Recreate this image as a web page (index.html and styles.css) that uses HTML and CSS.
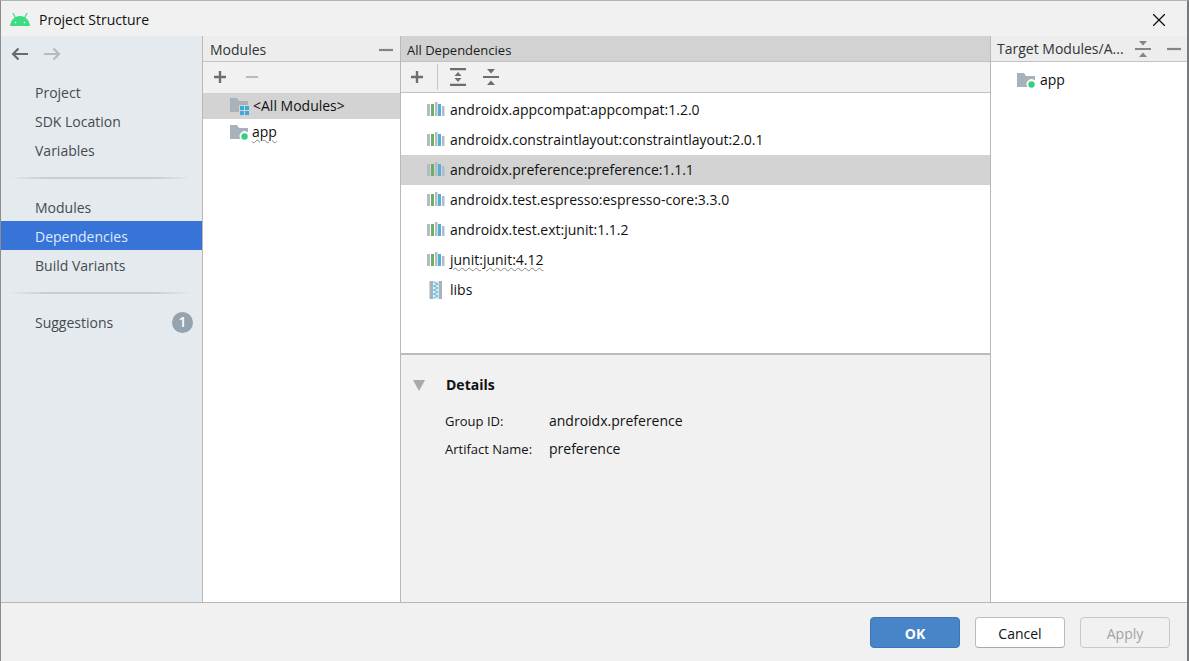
FILE: index.html
```html
<!DOCTYPE html>
<html lang="en">
<head>
<meta charset="utf-8">
<title>Project Structure</title>
<link rel="stylesheet" href="styles.css">
</head>
<body>
<svg class="defs" aria-hidden="true">
  <symbol id="lib" viewBox="0 0 18 16">
    <path fill="#b3bcc2" d="M0 2h3v12H0zM8 0h2.500v14H8zM15 4h2.500v10H15z"/>
    <path fill="#6bb060" d="M4 2h3v12H4z"/>
    <path fill="#50b0d8" d="M11 2h3v12h-3z"/>
  </symbol>
  <symbol id="folder-app" viewBox="0 0 18 17">
    <path fill="#a7b2ba" d="M0 1h7l2 3h9v4.500a5 5 0 0 0-7.500 6.500H0z"/>
    <circle cx="14.500" cy="12.500" r="3.200" fill="#35d07f"/>
  </symbol>
  <symbol id="folder-all" viewBox="0 0 19 18">
    <path fill="#a7b2ba" d="M0 1h7l2 3h9v4H9v7H0z"/>
    <path fill="#3fa9d6" d="M10 9h4v4h-4zM15 9h4v4h-4zM10 14h4v4h-4zM15 14h4v4h-4z"/>
  </symbol>
  <symbol id="plus" viewBox="0 0 16 16"><path stroke="#6e6e6e" stroke-width="2.400" d="M8 2v12M2 8h12"/></symbol>
  <symbol id="minus" viewBox="0 0 16 16"><path stroke="currentColor" stroke-width="2.200" d="M1 8h14"/></symbol>
  <symbol id="collapse" viewBox="0 0 16 16">
    <path fill="currentColor" d="M0 7h16v2H0zM4 0h8L8 4.500zM4 16h8l-4-4.500z"/>
  </symbol>
  <symbol id="expand" viewBox="0 0 16 18">
    <path fill="currentColor" d="M0 0h16v2.200H0zM0 15.800h16V18H0zM4.500 8L8 4l3.500 4zM4.500 10h7L8 14z"/>
  </symbol>
</svg>
<div class="window">
  <header class="titlebar">
    <svg class="logo" viewBox="0 0 20 14" aria-hidden="true">
      <path fill="#3ddc84" d="M0 13C.5 7.500 4.500 3 10 3s9.500 4.500 10 10z"/>
      <path stroke="#3ddc84" stroke-width="1.200" d="M5.500 5L3 0M14.500 5L17 0"/>
      <circle cx="5.500" cy="9.500" r=".8" fill="#e8fff2"/><circle cx="14.500" cy="9.500" r=".8" fill="#e8fff2"/>
    </svg>
    <h1 class="title">Project Structure</h1>
    <button class="icon-button close" aria-label="Close"><svg width="12" height="12" viewBox="0 0 12 12"><path stroke="#111" stroke-width="1.300" d="M0 0l12 12M12 0L0 12"/></svg></button>
  </header>
  <main class="content">
    <nav class="sidebar">
      <div class="history">
        <button class="icon-button" aria-label="Back"><svg width="17" height="14" viewBox="0 0 17 14"><path fill="none" stroke="#6a6a6a" stroke-width="2.200" d="M17 7H2M7.500 1.500L2 7l5.500 5.500"/></svg></button>
        <button class="icon-button" aria-label="Forward" disabled><svg width="17" height="14" viewBox="0 0 17 14"><path fill="none" stroke="#b8bbbd" stroke-width="2.200" d="M0 7h15M9.500 1.500L15 7l-5.500 5.500"/></svg></button>
      </div>
      <a class="nav-item" href="#">Project</a>
      <a class="nav-item" href="#">SDK Location</a>
      <a class="nav-item" href="#">Variables</a>
      <hr class="divider">
      <a class="nav-item" href="#">Modules</a>
      <a class="nav-item selected" href="#">Dependencies</a>
      <a class="nav-item" href="#">Build Variants</a>
      <hr class="divider">
      <a class="nav-item" href="#">Suggestions<span class="badge">1</span></a>
    </nav>
    <section class="panel modules">
      <div class="panel-head">
        <h2 class="panel-title">Modules</h2>
        <button class="icon-button dim" aria-label="Hide modules"><svg width="16" height="16"><use href="#minus"/></svg></button>
      </div>
      <div class="toolbar short">
        <button class="icon-button" aria-label="Add module"><svg width="16" height="16"><use href="#plus"/></svg></button>
        <button class="icon-button faint" aria-label="Remove module" disabled><svg width="14" height="16"><use href="#minus"/></svg></button>
      </div>
      <ul class="tree">
        <li class="tree-row selected"><svg width="19" height="18"><use href="#folder-all"/></svg><span>&lt;All Modules&gt;</span></li>
        <li class="tree-row"><svg width="18" height="17"><use href="#folder-app"/></svg><span class="warn">app</span></li>
      </ul>
    </section>
    <section class="panel dependencies">
      <div class="panel-head active"><h2 class="panel-title small">All Dependencies</h2></div>
      <div class="toolbar">
        <button class="icon-button" aria-label="Add dependency"><svg width="16" height="16"><use href="#plus"/></svg></button>
        <span class="separator"></span>
        <button class="icon-button" aria-label="Expand all"><svg width="16" height="18"><use href="#expand"/></svg></button>
        <button class="icon-button" aria-label="Collapse all"><svg width="16" height="16"><use href="#collapse"/></svg></button>
      </div>
      <ul class="dep-list">
        <li class="dep-row"><svg width="18" height="16"><use href="#lib"/></svg><span>androidx.appcompat:appcompat:1.2.0</span></li>
        <li class="dep-row"><svg width="18" height="16"><use href="#lib"/></svg><span>androidx.constraintlayout:constraintlayout:2.0.1</span></li>
        <li class="dep-row selected"><svg width="18" height="16"><use href="#lib"/></svg><span>androidx.preference:preference:1.1.1</span></li>
        <li class="dep-row"><svg width="18" height="16"><use href="#lib"/></svg><span>androidx.test.espresso:espresso-core:3.3.0</span></li>
        <li class="dep-row"><svg width="18" height="16"><use href="#lib"/></svg><span>androidx.test.ext:junit:1.1.2</span></li>
        <li class="dep-row"><svg width="18" height="16"><use href="#lib"/></svg><span class="warn">junit:junit:4.12</span></li>
        <li class="dep-row"><svg width="18" height="18" viewBox="0 0 18 18"><path fill="#a7b2ba" d="M2.500 0H6v18H2.500zM11.500 0H15v18h-3.500z"/><path fill="#d9f0f8" d="M6 0h5.500v18H6z"/><path fill="none" stroke="#5cb8dc" stroke-width="1" d="M6.500 1l4.500 2-4.500 2 4.500 2-4.500 2 4.500 2-4.500 2 4.500 2-4.500 2"/></svg><span>libs</span></li>
      </ul>
      <div class="details">
        <button class="details-toggle" aria-expanded="true"><svg width="12" height="11" viewBox="0 0 12 11"><path fill="#a9a9a9" d="M0 0h12L6 11z"/></svg>Details</button>
        <dl class="details-grid">
          <dt>Group ID:</dt><dd>androidx.preference</dd>
          <dt>Artifact Name:</dt><dd>preference</dd>
        </dl>
      </div>
    </section>
    <section class="panel targets">
      <div class="panel-head">
        <h2 class="panel-title">Target Modules/A...</h2>
        <button class="icon-button dim" aria-label="Collapse targets"><svg width="16" height="16"><use href="#collapse"/></svg></button>
        <button class="icon-button dim" aria-label="Hide targets"><svg width="16" height="16"><use href="#minus"/></svg></button>
      </div>
      <ul class="tree padded">
        <li class="tree-row"><svg width="18" height="17"><use href="#folder-app"/></svg><span>app</span></li>
      </ul>
    </section>
  </main>
  <footer class="footer">
    <button class="button primary">OK</button>
    <button class="button">Cancel</button>
    <button class="button" disabled>Apply</button>
  </footer>
</div>
</body>
</html>
```
FILE: styles.css
```css
* { box-sizing: border-box; }

body {
  margin: 0;
  font-family: "Open Sans", "Noto Sans", sans-serif;
  font-size: 14px;
  line-height: 20px;
  color: #111;
  background: #f1f1f1;
}

.defs { position: absolute; width: 0; height: 0; }
svg { display: block; flex: none; }
h1, h2, ul, dl, dd { margin: 0; padding: 0; font-weight: 400; }
ul { list-style: none; }
button { font: inherit; color: inherit; }

.window {
  display: flex;
  flex-direction: column;
  min-height: 100vh;
  border: 1px solid #8c8c8c;
  border-top-color: #b4b4b4;
  border-right: 2px solid #77797b;
  border-bottom: 0;
}

.titlebar {
  display: flex;
  align-items: center;
  height: 35px;
  padding: 2px 22px 0 9px;
}
.logo { width: 20px; height: 14px; margin-right: 9px; }
.title { flex: 1; font-size: 14px; }

.icon-button {
  display: flex;
  align-items: center;
  justify-content: center;
  padding: 0;
  border: 0;
  background: none;
  color: #6e6e6e;
}
.dim { color: #858585; }
.faint { color: #b8b8b8; }

.content {
  flex: 1;
  display: grid;
  grid-template-columns: 201px 198px minmax(0, 1fr) 197px;
  border-bottom: 1px solid #b6b6b6;
}

.sidebar {
  display: flex;
  flex-direction: column;
  background: #e4eaee;
}
.history { display: flex; gap: 16px; padding: 11px 10px 16px; }
.nav-item {
  display: flex;
  align-items: center;
  justify-content: space-between;
  height: 29px;
  padding: 2px 9px 0 34px;
  color: #464b50;
  text-decoration: none;
}
.nav-item.selected { background: #3874d8; color: #dcebff; }
.divider {
  width: 182px;
  height: 2px;
  margin: 13px 8px;
  border: 0;
  background: linear-gradient(90deg, transparent, #c8cdd0 20%, #c8cdd0 80%, transparent);
}
.badge {
  width: 21px;
  height: 21px;
  border-radius: 50%;
  background: #95a3af;
  color: #fff;
  font-weight: 600;
  text-align: center;
}

.panel {
  display: flex;
  flex-direction: column;
  min-width: 0;
  border-left: 1px solid #b9b9b9;
  background: #fff;
}
.panel-head {
  display: flex;
  align-items: center;
  gap: 15px;
  height: 26px;
  padding: 2px 6px 0 7px;
  border-bottom: 1px solid #c2c2c2;
  background: #ededed;
  color: #333;
}
.panel-head.active { background: #d2d2d2; padding-left: 6px; }
.panel-title {
  flex: 1;
  min-width: 0;
  font-size: 14px;
  white-space: nowrap;
}
.panel-title.small { font-size: 13px; color: #1c1c1c; }
.targets .panel-head { padding: 0 5px 0 6px; }

.toolbar {
  display: flex;
  align-items: center;
  gap: 17px;
  height: 31px;
  padding: 0 8px;
  border-bottom: 1px solid #c2c2c2;
  background: #f1f1f1;
}
.toolbar.short { border-bottom-color: #f1f1f1; padding-left: 9px; }
.separator { width: 1px; height: 26px; margin: 0 -5px; background: #c8c8c8; }

.tree-row {
  display: flex;
  align-items: center;
  gap: 4px;
  height: 26px;
  padding-left: 27px;
}
.tree.padded { padding-top: 5px; }
.targets .tree-row { padding-left: 26px; gap: 5px; }
.selected { background: #d3d3d3; }
.warn { text-decoration: underline wavy #888 1px; text-underline-offset: 2px; }

.dep-list { flex: 1; padding: 2px 0 48px; }
.dep-row {
  display: flex;
  align-items: center;
  gap: 5px;
  height: 30px;
  padding-left: 26px;
}

.details {
  min-height: 249px;
  padding: 20px 12px;
  border-top: 2px solid #bbb;
  background: #f1f1f1;
}
.details-toggle {
  display: flex;
  align-items: center;
  gap: 21px;
  padding: 0;
  border: 0;
  background: none;
  font-weight: 700;
}
.details-grid {
  display: grid;
  grid-template-columns: 104px 1fr;
  row-gap: 8px;
  padding: 16px 0 0 32px;
}
.details-grid dt { font-size: 13px; }

.footer {
  display: flex;
  justify-content: flex-end;
  gap: 15px;
  padding: 14px 17px 13px;
}
.button {
  width: 90px;
  height: 31px;
  padding: 2px 0 0;
  border: 1px solid #bcbcbc;
  border-bottom-color: #a9a9a9;
  border-radius: 4px;
  background: #fff;
}
.button.primary {
  border-color: #3c76b8;
  background: #4884c8;
  color: #fff;
  font-weight: 700;
}
.button:disabled {
  border-color: #c9c9c9;
  background: #f1f1f1;
  color: #a2a2a2;
}
```
